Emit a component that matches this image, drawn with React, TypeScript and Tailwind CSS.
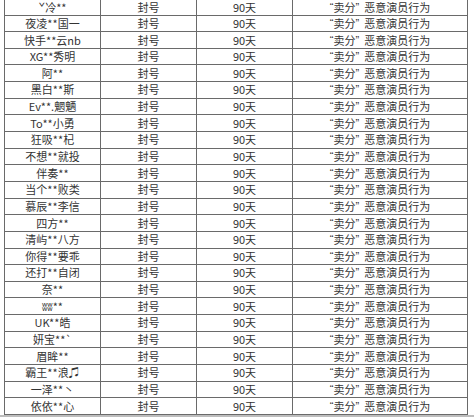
const names = [
  "ˇ冷**",
  "夜凌**国一",
  "快手**云nb",
  "XG**秀明",
  "阿**",
  "黑白**斯",
  "Ev**.魍魉",
  "To**小勇",
  "狂吸**杞",
  "不想**就投",
  "伴奏**",
  "当个**败类",
  "慕辰**李信",
  "四方**",
  "清屿**八方",
  "你得**要乖",
  "还打**自闭",
  "奈**",
  "ʬʬ**",
  "UK**皓",
  "妍宝**`",
  "眉眸**",
  "霸王**浪♫",
  "一泽**丶",
  "依依**心",
];

const App = () => {
  return (
    <div
      className="min-h-[417px] bg-white text-[11px] text-[#333]"
      style={{ fontFamily: '"Noto Sans CJK SC", "Liberation Sans", sans-serif' }}
    >
      <div className="ml-[4px] w-[464px] border-l border-r border-[#6a6a6a]">
        {names.map((name, i) => (
          <div
            key={i}
            className={`flex border-b border-[#6a6a6a] ${i === 0 ? "h-[15.55px]" : "h-[16.65px]"}`}
          >
            <div className="flex w-[96px] shrink-0 items-center justify-center border-r border-[#6a6a6a] leading-none">
              {name}
            </div>
            <div className="flex w-[96px] shrink-0 items-center justify-center border-r border-[#6a6a6a] leading-none">
              封号
            </div>
            <div className="flex w-[96px] shrink-0 items-center justify-center border-r border-[#6a6a6a] leading-none">
              90天
            </div>
            <div className="flex flex-1 items-center justify-center leading-none">
              <span style={{ fontFamily: '"Liberation Sans", sans-serif' }}>“</span>
              卖分
              <span style={{ fontFamily: '"Liberation Sans", sans-serif' }}>”</span>
              <span className="ml-[5px]">恶意演员行为</span>
            </div>
          </div>
        ))}
      </div>
      <div className="h-[2px] bg-[#bdbdbd]" />
    </div>
  );
};

export default App;
